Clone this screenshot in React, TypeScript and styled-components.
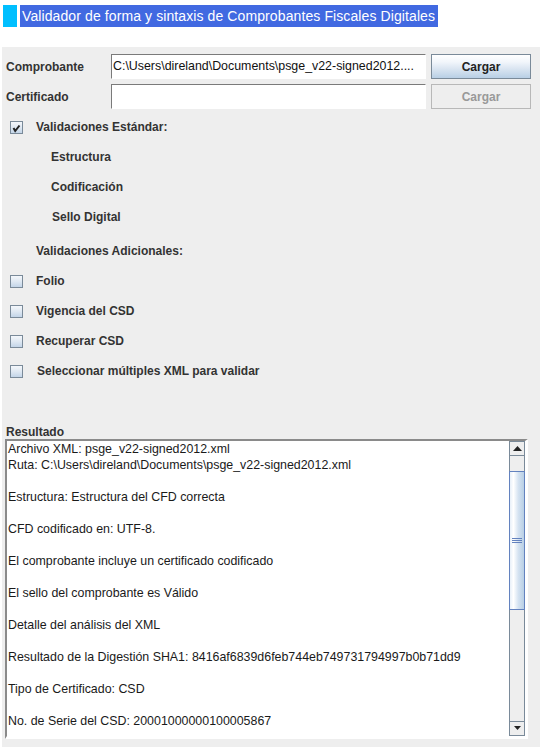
import React from "react";
import styled, { createGlobalStyle } from "styled-components";

const GlobalStyle = createGlobalStyle`
  html, body {
    margin: 0;
    padding: 0;
    background: #ffffff;
    font-family: "Liberation Sans", Arial, sans-serif;
  }
`;

const Page = styled.div`
  width: 540px;
  height: 747px;
  display: flex;
  flex-direction: column;
  overflow: hidden;
`;

const TitleBar = styled.div`
  display: flex;
  gap: 3px;
  margin: 5px 0 0 3px;
  height: 22px;
`;

const TitleMark = styled.div`
  width: 14px;
  background: #00bfff;
`;

const TitleText = styled.div`
  width: 416px;
  background: #4169e1;
  color: #ffffff;
  font-size: 14px;
  letter-spacing: 0.1px;
  line-height: 22px;
  padding-left: 2px;
  white-space: nowrap;
`;

const Panel = styled.div`
  margin: 20px 0 0 2px;
  flex: 1;
  background: #eeeeee;
  display: flex;
  flex-direction: column;
  padding-top: 7px;
`;

const FileRows = styled.div`
  display: flex;
  flex-direction: column;
  gap: 5px;
`;

const FileRow = styled.div`
  display: flex;
  align-items: center;
  height: 25px;
`;

const FieldLabel = styled.div`
  width: 105px;
  padding-left: 4px;
  font-size: 12px;
  font-weight: bold;
  color: #333333;
`;

const TextField = styled.div`
  box-sizing: border-box;
  width: 315px;
  height: 25px;
  background: #ffffff;
  border-top: 1px solid #7a7a7a;
  border-left: 1px solid #7a7a7a;
  border-right: 1px solid #ffffff;
  border-bottom: 1px solid #ffffff;
  font-size: 12.4px;
  line-height: 23px;
  padding-left: 1px;
  color: #111111;
  white-space: nowrap;
  overflow: hidden;
`;

const Button = styled.div<{ $disabled?: boolean }>`
  box-sizing: border-box;
  width: 100px;
  height: 25px;
  margin-left: 5px;
  display: flex;
  align-items: center;
  justify-content: center;
  font-size: 12px;
  font-weight: bold;
  color: ${(p) => (p.$disabled ? "#999999" : "#222222")};
  border: 1px solid ${(p) => (p.$disabled ? "#b8b8b8" : "#7a8a99")};
  background: ${(p) =>
    p.$disabled
      ? "#eeeeee"
      : "linear-gradient(to bottom, #ffffff 0%, #f2f6fb 30%, #dae5f1 60%, #b8cfe5 100%)"};
`;

const OptionList = styled.div`
  display: flex;
  flex-direction: column;
  margin-top: 3px;
`;

const OptionRow = styled.div<{ $indent?: number; $gap?: number }>`
  display: flex;
  align-items: center;
  height: 30px;
  margin-top: ${(p) => p.$gap ?? 0}px;
  padding-left: ${(p) => p.$indent ?? 34}px;
  font-size: 12px;
  font-weight: bold;
  color: #333333;
  white-space: nowrap;
`;

const CheckRow = styled(OptionRow)`
  padding-left: 8px;
  gap: 13px;
`;

const CheckBox = styled.div`
  box-sizing: border-box;
  width: 13px;
  height: 13px;
  border: 1px solid #7a8a99;
  background: linear-gradient(to bottom, #f4f7fb 0%, #dfe8f2 50%, #c3d5e8 100%);
  display: flex;
  align-items: center;
  justify-content: center;
`;

const ResultLabel = styled.div`
  margin-top: 39px;
  padding-left: 4px;
  height: 14px;
  line-height: 14px;
  font-size: 12px;
  font-weight: bold;
  color: #333333;
`;

const ResultBox = styled.div`
  box-sizing: border-box;
  margin: 0 12px 0 3px;
  height: 300px;
  display: flex;
  background: #ffffff;
  border-top: 2px solid #8a8a8a;
  border-left: 2px solid #8a8a8a;
  border-right: 3px solid #ffffff;
  border-bottom: 3px solid #ffffff;
`;

const ResultText = styled.div`
  flex: 1;
  padding-left: 1px;
  font-size: 12.4px;
  line-height: 16px;
  color: #1a1a1a;
  overflow: hidden;
`;

const ResultLine = styled.div`
  height: 16px;
  white-space: nowrap;
`;

const ScrollBar = styled.div`
  width: 16px;
  display: flex;
  flex-direction: column;
  background: #eeeeee;
`;

const ScrollButton = styled.div`
  box-sizing: border-box;
  height: 15px;
  border: 1px solid #7a8a99;
  background: #eeeeee;
  display: flex;
  align-items: center;
  justify-content: center;
`;

const ScrollTrack = styled.div`
  flex: 1;
  display: flex;
  flex-direction: column;
  border-left: 1px solid #7a8a99;
  border-right: 1px solid #7a8a99;
  padding-top: 15px;
`;

const ScrollThumb = styled.div`
  box-sizing: border-box;
  height: 139px;
  margin: 0 -1px;
  border: 1px solid #6382bf;
  background: linear-gradient(to right, #e8f0f9 0%, #ffffff 25%, #d4e2f1 60%, #b8cfe5 100%);
  display: flex;
  flex-direction: column;
  align-items: center;
  justify-content: center;
  gap: 1px;
`;

const Grip = styled.div`
  width: 10px;
  height: 1px;
  background: #6382bf;
`;

const Arrow = ({ up }: { up?: boolean }) => (
  <svg width="9" height="5" viewBox="0 0 9 5">
    <path d={up ? "M0 5 L4.5 0 L9 5 Z" : "M1 0 L4.5 4 L8 0 Z"} fill="#222222" />
  </svg>
);

const Check = () => (
  <svg width="11" height="11" viewBox="0 0 11 11">
    <path d="M2.5 6 L4.2 9 L8.5 3.5" stroke="#222222" strokeWidth="2" fill="none" />
  </svg>
);

const resultLines = [
  "Archivo XML: psge_v22-signed2012.xml",
  "Ruta: C:\\Users\\direland\\Documents\\psge_v22-signed2012.xml",
  "",
  "Estructura: Estructura del CFD correcta",
  "",
  "CFD codificado en: UTF-8.",
  "",
  "El comprobante incluye un certificado codificado",
  "",
  "El sello del comprobante es Válido",
  "",
  "Detalle del análisis del XML",
  "",
  "Resultado de la Digestión SHA1: 8416af6839d6feb744eb749731794997b0b71dd9",
  "",
  "Tipo de Certificado: CSD",
  "",
  "No. de Serie del CSD: 20001000000100005867",
  "",
];

const App = () => {
  return (
    <Page>
      <GlobalStyle />
      <TitleBar>
        <TitleMark />
        <TitleText>Validador de forma y sintaxis de Comprobantes Fiscales Digitales</TitleText>
      </TitleBar>
      <Panel>
        <FileRows>
          <FileRow>
            <FieldLabel>Comprobante</FieldLabel>
            <TextField>C:\Users\direland\Documents\psge_v22-signed2012....</TextField>
            <Button>Cargar</Button>
          </FileRow>
          <FileRow>
            <FieldLabel>Certificado</FieldLabel>
            <TextField />
            <Button $disabled>Cargar</Button>
          </FileRow>
        </FileRows>
        <OptionList>
          <CheckRow>
            <CheckBox>
              <Check />
            </CheckBox>
            Validaciones Estándar:
          </CheckRow>
          <OptionRow $indent={49}>Estructura</OptionRow>
          <OptionRow $indent={49}>Codificación</OptionRow>
          <OptionRow $indent={50}>Sello Digital</OptionRow>
          <OptionRow $gap={4}>Validaciones Adicionales:</OptionRow>
          <CheckRow>
            <CheckBox />
            Folio
          </CheckRow>
          <CheckRow>
            <CheckBox />
            Vigencia del CSD
          </CheckRow>
          <CheckRow>
            <CheckBox />
            Recuperar CSD
          </CheckRow>
          <CheckRow>
            <CheckBox />
            <span style={{ marginLeft: 1 }}>Seleccionar múltiples XML para validar</span>
          </CheckRow>
        </OptionList>
        <ResultLabel>Resultado</ResultLabel>
        <ResultBox>
          <ResultText>
            {resultLines.map((line, i) => (
              <ResultLine key={i}>{line}</ResultLine>
            ))}
          </ResultText>
          <ScrollBar>
            <ScrollButton>
              <Arrow up />
            </ScrollButton>
            <ScrollTrack>
              <ScrollThumb>
                <Grip />
                <Grip />
                <Grip />
              </ScrollThumb>
            </ScrollTrack>
            <ScrollButton>
              <Arrow />
            </ScrollButton>
          </ScrollBar>
        </ResultBox>
      </Panel>
    </Page>
  );
};

export default App;
